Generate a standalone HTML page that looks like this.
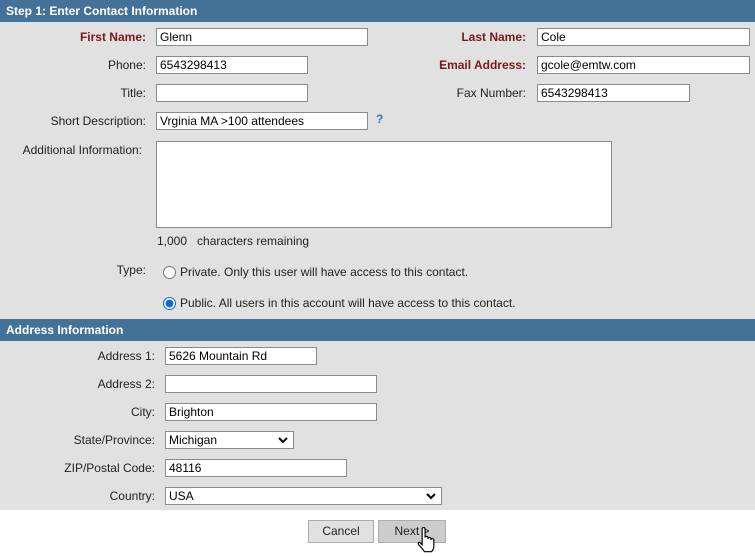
<!DOCTYPE html>
<html><head><style>
*{box-sizing:border-box;margin:0;padding:0}
body{width:755px;height:557px;background:#fff;font-family:"Liberation Sans",Arial,sans-serif;font-size:12px;color:#222;position:relative;overflow:hidden}
.gray{position:absolute;left:0;width:755px;background:#e1e1e1}
.hdr{position:absolute;left:0;width:755px;background:#447196;color:#fff;font-weight:bold;font-size:12px;padding-left:6px}
.l{position:absolute;text-align:right;line-height:18px;white-space:nowrap}
.r{color:#7a1a1a;font-weight:bold}
.i{position:absolute;height:18px;background:#fff;border:1px solid #8a8a8a;line-height:16px;padding-left:3px;font-size:12px;color:#000;white-space:nowrap}
.t{position:absolute;line-height:18px;white-space:nowrap}
.rad{position:absolute;width:13px;height:13px;border-radius:50%;border:1px solid #777;background:#fff}
.btn{position:absolute;height:23px;border:1px solid #adadad;background:#e1e1e1;text-align:center;line-height:21px;font-size:12px;color:#222}
.chev{position:absolute;right:5px;top:3px}
</style></head><body>
<div class="gray" style="top:0;height:510px"></div>
<div class="hdr" style="top:0;height:22px;line-height:22px">Step 1: Enter Contact Information</div>

<div class="l r" style="right:609px;top:28px">First Name:</div>
<div class="i" style="left:156px;top:28px;width:212px">Glenn</div>
<div class="l r" style="right:229px;top:28px">Last Name:</div>
<div class="i" style="left:537px;top:28px;width:213px">Cole</div>

<div class="l" style="right:609px;top:56px">Phone:</div>
<div class="i" style="left:156px;top:56px;width:152px">6543298413</div>
<div class="l r" style="right:229px;top:56px">Email Address:</div>
<div class="i" style="left:537px;top:56px;width:213px">gcole@emtw.com</div>

<div class="l" style="right:609px;top:84px">Title:</div>
<div class="i" style="left:156px;top:84px;width:152px"></div>
<div class="l" style="right:229px;top:84px">Fax Number:</div>
<div class="i" style="left:537px;top:84px;width:153px">6543298413</div>

<div class="l" style="right:609px;top:112px">Short Description:</div>
<div class="i" style="left:156px;top:112px;width:212px">Vrginia MA &gt;100 attendees</div>
<div class="t" style="left:376px;top:110px;color:#3a7ab0;font-weight:bold">?</div>

<div class="l" style="right:613px;top:141px">Additional Information:</div>
<div class="i" style="left:156px;top:141px;width:456px;height:87px"></div>
<div class="t" style="left:157px;top:232px">1,000&nbsp;&nbsp; characters remaining</div>

<div class="l" style="right:609px;top:261px">Type:</div>
<div class="rad" style="left:163px;top:266px"></div>
<div class="t" style="left:180px;top:263px">Private. Only this user will have access to this contact.</div>
<div class="rad" style="left:163px;top:297px;border:1px solid #0a6ad8;background:radial-gradient(circle,#0a6ad8 0 3.6px,#fff 4.2px)"></div>
<div class="t" style="left:180px;top:294px">Public. All users in this account will have access to this contact.</div>

<div class="hdr" style="top:319px;height:22px;line-height:22px">Address Information</div>

<div class="l" style="right:600px;top:347px">Address 1:</div>
<div class="i" style="left:165px;top:347px;width:152px">5626 Mountain Rd</div>
<div class="l" style="right:600px;top:375px">Address 2:</div>
<div class="i" style="left:165px;top:375px;width:212px"></div>
<div class="l" style="right:600px;top:403px">City:</div>
<div class="i" style="left:165px;top:403px;width:212px">Brighton</div>
<div class="l" style="right:600px;top:431px">State/Province:</div>
<div class="i" style="left:165px;top:431px;width:129px">Michigan<svg class="chev" width="10" height="10" viewBox="0 0 10 10"><path d="M1 3l4 4 4-4" stroke="#000" stroke-width="2" fill="none"/></svg></div>
<div class="l" style="right:600px;top:459px">ZIP/Postal Code:</div>
<div class="i" style="left:165px;top:459px;width:182px">48116</div>
<div class="l" style="right:600px;top:487px">Country:</div>
<div class="i" style="left:165px;top:487px;width:277px">USA<svg class="chev" width="10" height="10" viewBox="0 0 10 10"><path d="M1 3l4 4 4-4" stroke="#000" stroke-width="2" fill="none"/></svg></div>

<div class="btn" style="left:308px;top:520px;width:66px">Cancel</div>
<div class="btn" style="left:378px;top:520px;width:68px;background:#ccc">Next &gt;</div>
<svg style="position:absolute;left:416px;top:526px" width="24" height="28" viewBox="0 0 20 24"><path d="M5 2c1-1 2.5-1 2.5 1v7c0-1.5 2.5-1.5 2.5 0v1c0-1.5 2.5-1.5 2.5 0v1c0-1.5 2.5-1.5 2.5 0v5c0 2-1 4-2 5H7c-1-1.5-3-4-5-6-1-1.5.5-2.5 1.5-1.5L5 16V2z" fill="#fff" stroke="#000" stroke-width="1"/></svg>
</body></html>
